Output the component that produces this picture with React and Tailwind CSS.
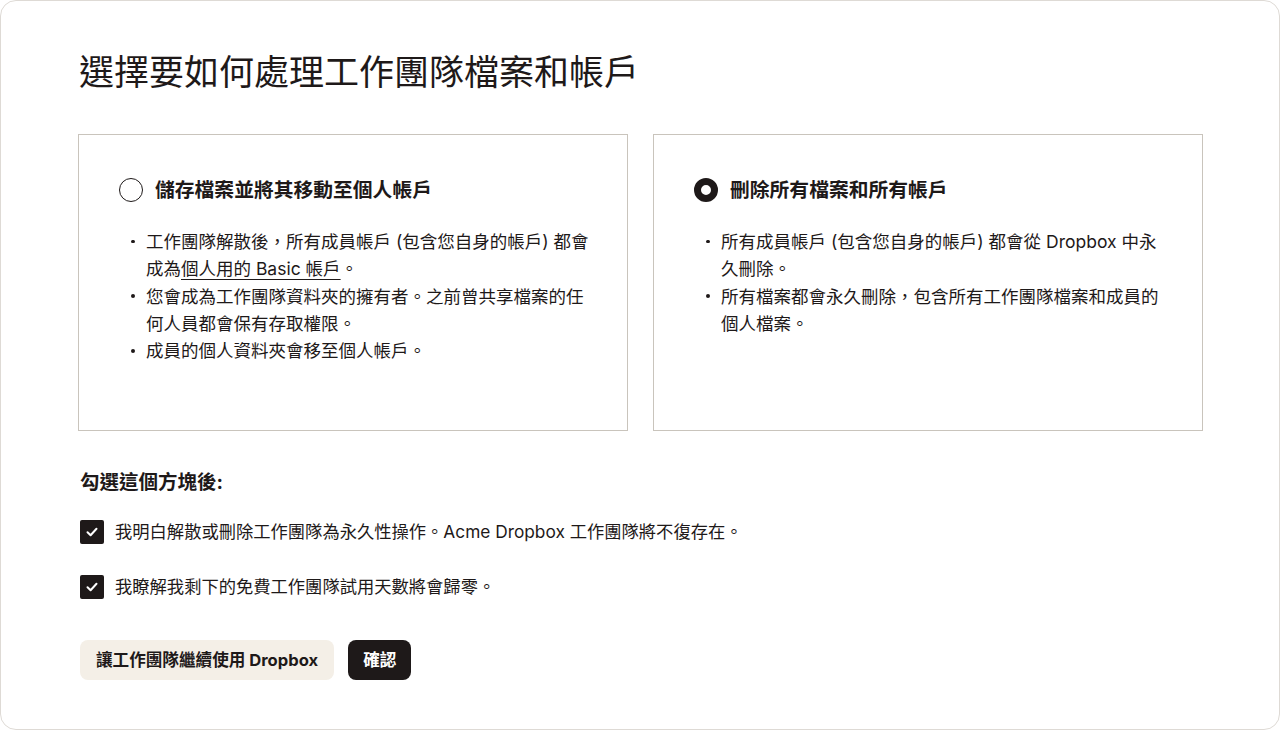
import React from "react";

const font = { fontFamily: 'Inter, "Noto Sans CJK TC", sans-serif' };

function Bullet({ children }) {
  return (
    <li className="flex">
      <span className="flex h-[27.3px] w-[27px] shrink-0 items-center pl-[12px]">
        <span className="block h-[3.5px] w-[3.5px] rounded-full bg-[#1e1919]"></span>
      </span>
      <span className="flex-1">{children}</span>
    </li>
  );
}

function Check() {
  return (
    <span className="flex h-[24px] w-[24px] shrink-0 items-center justify-center rounded-[2px] bg-[#1e1919]">
      <svg width="14" height="14" viewBox="0 0 14 14" fill="none">
        <path d="M2.5 7.2 L5.6 10.2 L11.5 3.8" stroke="white" strokeWidth="2" strokeLinecap="round" strokeLinejoin="round" />
      </svg>
    </span>
  );
}

export default function App() {
  return (
    <div className="h-[730px] w-[1280px] bg-white text-[#1e1919]" style={font}>
      <div className="box-border h-[730px] w-[1280px] rounded-[16px] border border-[#dedad5] bg-white px-[77px] pt-[49px]">
        <h1 className="pl-[1px] text-[35px] font-normal leading-[44px] tracking-normal">選擇要如何處理工作團隊檔案和帳戶</h1>

        <div className="mt-[40px] flex gap-[25px]">
          <div className="box-border h-[297px] w-[550px] shrink-0 border border-[#c9c4bc] pl-[40px] pr-[34px] pt-[40px]">
            <div className="flex items-center gap-[12px]">
              <span className="box-border h-[24px] w-[24px] rounded-full border-[1.5px] border-[#1e1919]"></span>
              <span className="text-[19.8px] font-bold leading-[30px]">儲存檔案並將其移動至個人帳戶</span>
            </div>
            <ul className="mt-[23px] text-[17.5px] leading-[27.3px]">
              <Bullet>工作團隊解散後，所有成員帳戶 (包含您自身的帳戶) 都會成為<span className="underline decoration-1 underline-offset-[4px]">個人用的 Basic 帳戶</span>。</Bullet>
              <Bullet>您會成為工作團隊資料夾的擁有者。之前曾共享檔案的任何人員都會保有存取權限。</Bullet>
              <Bullet>成員的個人資料夾會移至個人帳戶。</Bullet>
            </ul>
          </div>

          <div className="box-border h-[297px] w-[550px] shrink-0 border border-[#c9c4bc] pl-[40px] pr-[34px] pt-[40px]">
            <div className="flex items-center gap-[12px]">
              <span className="box-border h-[24px] w-[24px] rounded-full border-[7px] border-[#1e1919] bg-white"></span>
              <span className="text-[19.8px] font-bold leading-[30px]">刪除所有檔案和所有帳戶</span>
            </div>
            <ul className="mt-[23px] text-[17.5px] leading-[27.3px]">
              <Bullet>所有成員帳戶 (包含您自身的帳戶) 都會從 Dropbox 中永久刪除。</Bullet>
              <Bullet>所有檔案都會永久刪除，包含所有工作團隊檔案和成員的個人檔案。</Bullet>
            </ul>
          </div>
        </div>

        <div className="mt-[37px] pl-[2px] text-[19.5px] font-bold leading-[28px]">勾選這個方塊後:</div>

        <div className="mt-[24px] flex items-center gap-[11px] pl-[2px]">
          <Check />
          <span className="text-[17.3px] leading-[24px]">我明白解散或刪除工作團隊為永久性操作。Acme Dropbox 工作團隊將不復存在。</span>
        </div>
        <div className="mt-[31px] flex items-center gap-[11px] pl-[2px]">
          <Check />
          <span className="text-[17.3px] leading-[24px]">我瞭解我剩下的免費工作團隊試用天數將會歸零。</span>
        </div>

        <div className="mt-[41px] flex gap-[14px] pl-[2px]">
          <button className="h-[40px] rounded-[8px] bg-[#f4efe7] px-[16px] text-[16.6px] font-bold text-[#1e1919]">讓工作團隊繼續使用 Dropbox</button>
          <button className="h-[40px] rounded-[8px] bg-[#1e1919] px-[15px] text-[16.6px] font-bold text-white">確認</button>
        </div>
      </div>
    </div>
  );
}
